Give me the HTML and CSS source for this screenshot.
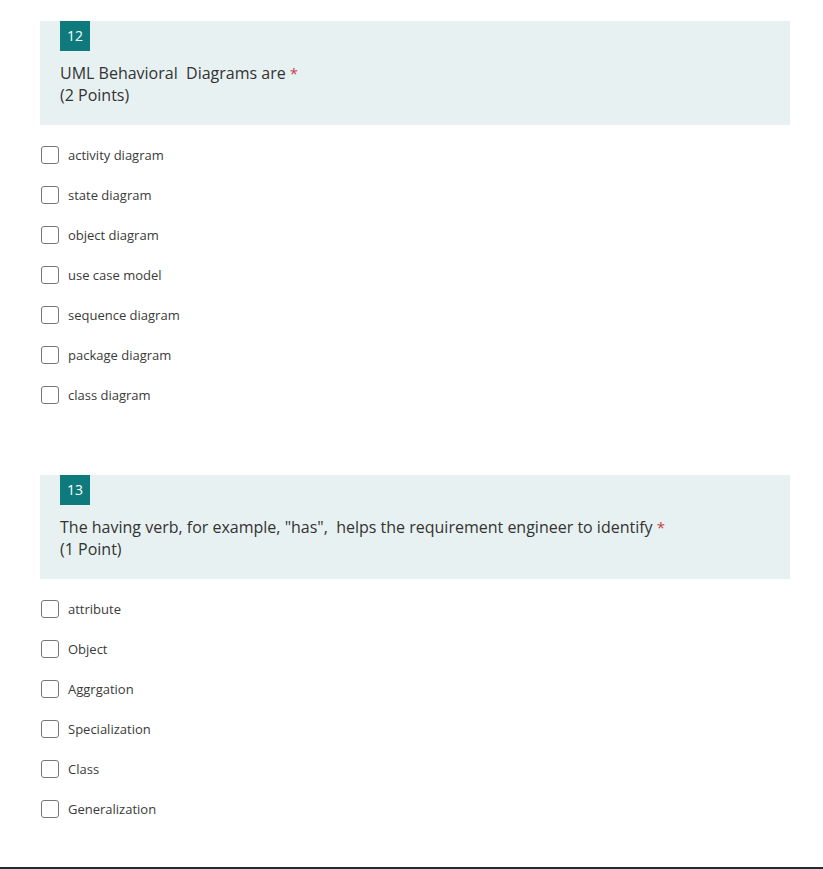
FILE: index.html
```html
<!DOCTYPE html>
<html>
<head>
<meta charset="utf-8">
<link rel="stylesheet" href="styles.css">
</head>
<body>
<div class="page">
  <section class="question">
    <div class="qhead">
      <div class="badge">12</div>
      <div class="qtitle">UML Behavioral&nbsp; Diagrams are <span class="req">*</span><br>(2 Points)</div>
    </div>
    <div class="options">
      <label class="opt"><span class="box"></span><span class="lbl">activity diagram</span></label>
      <label class="opt"><span class="box"></span><span class="lbl">state diagram</span></label>
      <label class="opt"><span class="box"></span><span class="lbl">object diagram</span></label>
      <label class="opt"><span class="box"></span><span class="lbl">use case model</span></label>
      <label class="opt"><span class="box"></span><span class="lbl">sequence diagram</span></label>
      <label class="opt"><span class="box"></span><span class="lbl">package diagram</span></label>
      <label class="opt"><span class="box"></span><span class="lbl">class diagram</span></label>
    </div>
  </section>
  <section class="question q2">
    <div class="qhead">
      <div class="badge">13</div>
      <div class="qtitle">The having verb, for example, "has",&nbsp; helps the requirement engineer to identify <span class="req">*</span><br>(1 Point)</div>
    </div>
    <div class="options">
      <label class="opt"><span class="box"></span><span class="lbl">attribute</span></label>
      <label class="opt"><span class="box"></span><span class="lbl">Object</span></label>
      <label class="opt"><span class="box"></span><span class="lbl">Aggrgation</span></label>
      <label class="opt"><span class="box"></span><span class="lbl">Specialization</span></label>
      <label class="opt"><span class="box"></span><span class="lbl">Class</span></label>
      <label class="opt"><span class="box"></span><span class="lbl">Generalization</span></label>
    </div>
  </section>
</div>
<div class="bottombar"></div>
</body>
</html>
```
FILE: styles.css
```css
html, body {
  margin: 0;
  padding: 0;
  background: #ffffff;
}
body {
  font-family: "Open Sans", "Noto Sans", sans-serif;
  color: #333333;
  width: 823px;
  height: 869px;
  overflow: hidden;
}
.page {
  padding-top: 21px;
  height: 846px;
}
.question {
  margin: 0 33px 0 40px;
}
.q2 {
  margin-top: 60px;
}
.qhead {
  background: #e8f1f1;
  padding: 0 20px 0 20px;
  height: 104px;
  box-sizing: border-box;
}
.badge {
  width: 30px;
  height: 30px;
  background: #0e7a7c;
  color: #ffffff;
  font-size: 14px;
  line-height: 30px;
  text-align: center;
}
.qtitle {
  margin-top: 11px;
  font-size: 16px;
  line-height: 22px;
  color: #333333;
}
.req {
  color: #c4434a;
  font-size: 15px;
}
.options {
  padding-top: 10px;
}
.opt {
  display: flex;
  align-items: center;
  height: 40px;
  padding-left: 1px;
}
.box {
  width: 16px;
  height: 16px;
  border: 1px solid #777777;
  border-radius: 3px;
  background: #ffffff;
  flex: none;
}
.lbl {
  margin-left: 9px;
  font-size: 13px;
  color: #3a3a3a;
}
.bottombar {
  height: 2px;
  background: #1e2b38;
}
```
